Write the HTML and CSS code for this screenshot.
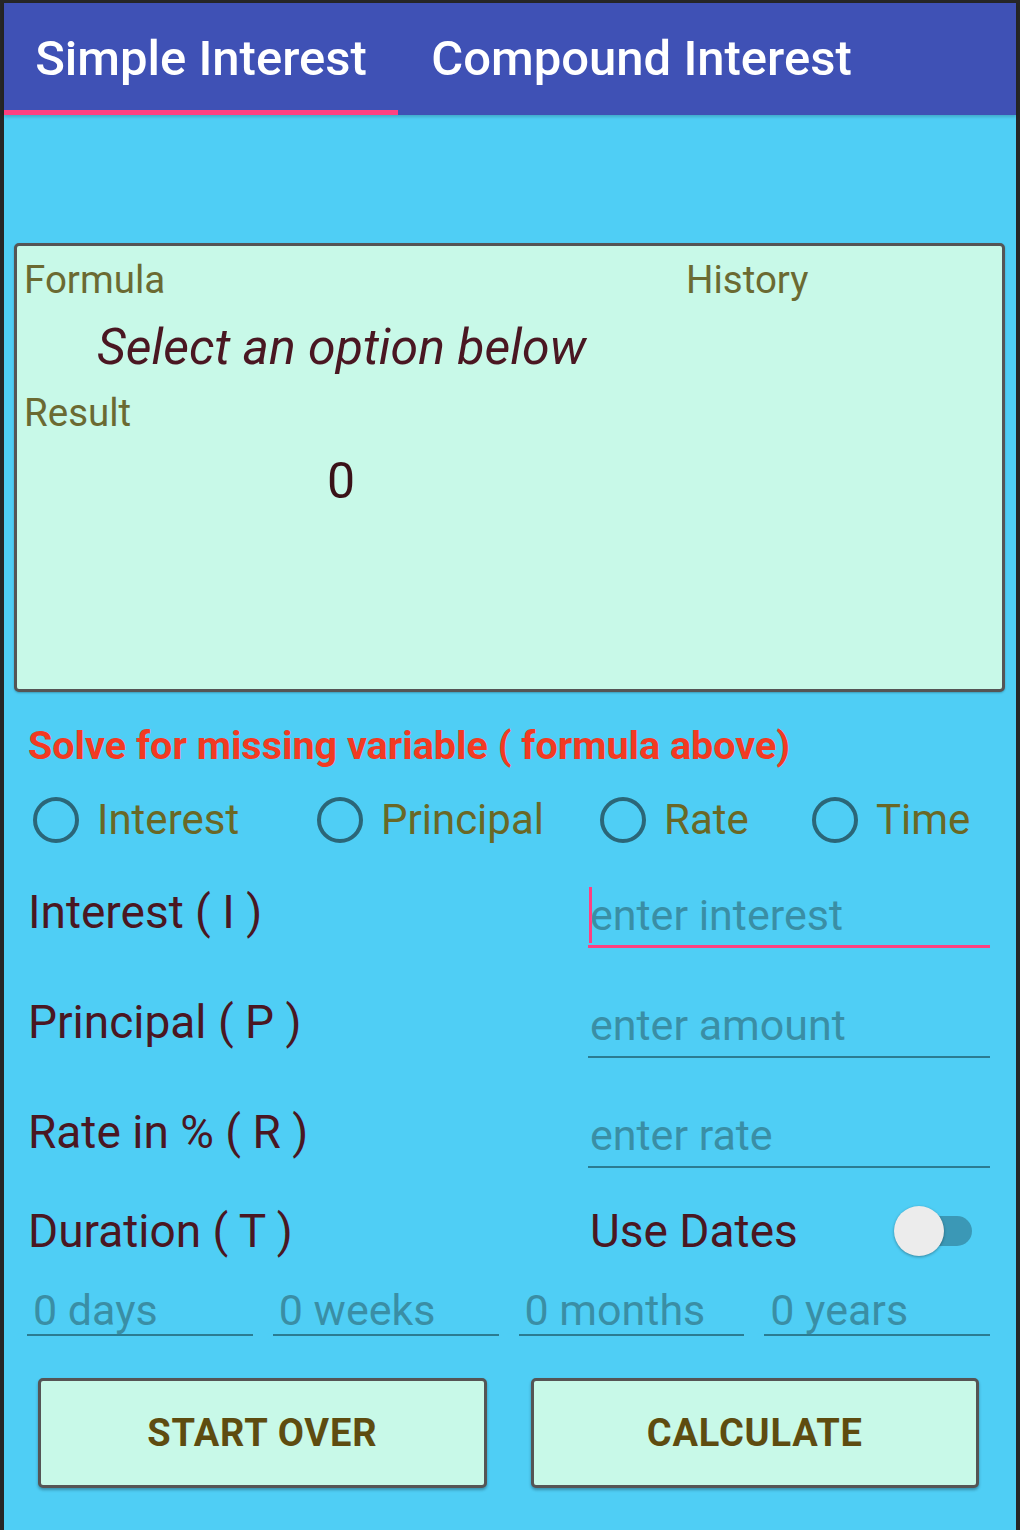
FILE: index.html
```html
<!DOCTYPE html>
<html lang="en">
<head>
<meta charset="utf-8">
<title>Interest Calculator</title>
<link rel="stylesheet" href="styles.css">
</head>
<body>
<div class="screen">
  <nav class="tabs">
    <div class="tab tab-active">Simple Interest</div>
    <div class="tab tab-second">Compound Interest</div>
  </nav>
  <main class="content">
    <section class="card">
      <div class="card-head">
        <span class="caption">Formula</span>
        <span class="caption">History</span>
      </div>
      <div class="formula">Select an option below</div>
      <div class="caption result-label">Result</div>
      <div class="result">0</div>
    </section>

    <div class="solve">Solve for missing variable ( formula above)</div>

    <div class="radios">
      <label class="radio"><span class="dot"></span><span class="radio-text">Interest</span></label>
      <label class="radio"><span class="dot"></span><span class="radio-text">Principal</span></label>
      <label class="radio"><span class="dot"></span><span class="radio-text">Rate</span></label>
      <label class="radio"><span class="dot"></span><span class="radio-text">Time</span></label>
    </div>

    <div class="row">
      <div class="row-label">Interest ( I )</div>
      <div class="field field-focus"><span class="caret"></span><span class="ph">enter interest</span></div>
    </div>
    <div class="row">
      <div class="row-label">Principal ( P )</div>
      <div class="field"><span class="ph">enter amount</span></div>
    </div>
    <div class="row">
      <div class="row-label">Rate in % ( R )</div>
      <div class="field"><span class="ph">enter rate</span></div>
    </div>
    <div class="row row-duration">
      <div class="row-label">Duration ( T )</div>
      <div class="use-dates">
        <span class="row-label">Use Dates</span>
        <span class="switch"></span>
      </div>
    </div>

    <div class="dates">
      <div class="date-field">0 days</div>
      <div class="date-field">0 weeks</div>
      <div class="date-field">0 months</div>
      <div class="date-field">0 years</div>
    </div>

    <div class="buttons">
      <button class="btn">START OVER</button>
      <button class="btn">CALCULATE</button>
    </div>
  </main>
</div>
</body>
</html>
```
FILE: styles.css
```css
* { box-sizing: border-box; }

html, body {
  margin: 0;
  padding: 0;
  background: #262626;
}

body {
  font-family: Roboto, "Noto Sans", "Liberation Sans", sans-serif;
}

.screen {
  width: 1020px;
  min-height: 1530px;
  border-top: 3px solid #262626;
  border-left: 4px solid #262626;
  border-right: 4px solid #262626;
  background: #4fcef5;
}

/* Tabs */
.tabs {
  display: flex;
  height: 112px;
  background: #3f51b5;
  box-shadow: 0 2px 3px rgba(0, 0, 0, 0.18);
  position: relative;
}

.tab {
  display: flex;
  align-items: center;
  justify-content: center;
  color: #ffffff;
  font-size: 49px;
  font-weight: 500;
  border-bottom: 5px solid transparent;
  padding-top: 4px;
}

.tab-active {
  width: 394px;
  border-bottom-color: #ff4081;
}

.tab-second {
  width: 487px;
}

/* Content */
.content {
  padding: 0 11px 0 10px;
}

.card {
  margin-top: 128px;
  height: 449px;
  background: #c8f9e8;
  border: 3px solid #555555;
  border-radius: 5px;
  padding: 12px 7px 0 7px;
  box-shadow: 0 1px 2px rgba(0, 0, 0, 0.25);
}

.card-head {
  display: grid;
  grid-template-columns: 662px auto;
  line-height: 44px;
}

.caption {
  font-size: 38.5px;
  color: #6b6a32;
}

.formula {
  margin-top: 15px;
  line-height: 60px;
  padding-left: 73px;
  font-size: 50px;
  font-style: italic;
  color: #4a1722;
}

.result-label {
  margin-top: 14px;
  line-height: 44px;
}

.result {
  margin-top: 16px;
  line-height: 60px;
  padding-left: 303px;
  font-size: 50px;
  color: #3a1218;
}

.solve {
  margin-top: 30px;
  height: 48px;
  line-height: 48px;
  padding-left: 14px;
  font-size: 39.5px;
  font-weight: 700;
  color: #f23a22;
}

/* Radios */
.radios {
  margin-top: 12px;
  height: 75px;
  padding-left: 19px;
  display: grid;
  grid-template-columns: 284px 283px 212px auto;
  align-items: center;
}

.radio {
  display: flex;
  align-items: center;
  gap: 18px;
}

.dot {
  width: 46px;
  height: 46px;
  border: 4px solid #2b6678;
  border-radius: 50%;
  flex: none;
}

.radio-text {
  font-size: 42px;
  color: #6a6826;
}

/* Rows */
.row {
  height: 110px;
  padding: 0 15px 0 14px;
  display: grid;
  grid-template-columns: 560px 1fr;
  align-items: center;
}

.row-label {
  font-size: 46px;
  color: #4a1722;
}

.field {
  align-self: end;
  margin-bottom: 19px;
  height: 64px;
  line-height: 60px;
  border-bottom: 2px solid #2b7c92;
  display: flex;
  align-items: center;
  padding-left: 2px;
}

.field-focus {
  border-bottom: 3px solid #ff4081;
}

.ph {
  font-size: 43px;
  color: #3a8ea5;
}

.caret {
  width: 3px;
  height: 56px;
  background: #ff4081;
  margin-left: -1px;
  margin-right: -2px;
  flex: none;
}

.row-duration {
  height: 88px;
}

.use-dates {
  display: flex;
  align-items: center;
  justify-content: space-between;
  padding-right: 18px;
}

.use-dates .row-label {
  padding-left: 2px;
}

.switch {
  position: relative;
  width: 77px;
  height: 30px;
  border-radius: 15px;
  background: #3b98b6;
}

.switch::before {
  content: "";
  position: absolute;
  left: -1px;
  top: -10px;
  width: 50px;
  height: 50px;
  border-radius: 50%;
  background: #ececec;
  box-shadow: 0 1px 3px rgba(0, 0, 0, 0.35);
}

/* Dates */
.dates {
  height: 61px;
  padding: 0 15px 0 13px;
  display: grid;
  grid-template-columns: repeat(4, 1fr);
  column-gap: 20px;
}

.date-field {
  border-bottom: 2px solid #2b7c92;
  font-size: 43px;
  line-height: 46px;
  padding-top: 12px;
  color: #3a8ea5;
  padding-left: 6px;
}

/* Buttons */
.buttons {
  margin-top: 42px;
  padding: 0 26px 0 24px;
  display: grid;
  grid-template-columns: 1fr 1fr;
  column-gap: 44px;
}

.btn {
  height: 110px;
  background: #c8f9e8;
  border: 3px solid #555555;
  border-radius: 5px;
  box-shadow: 0 2px 3px rgba(0, 0, 0, 0.3);
  font-family: Roboto, "Noto Sans", "Liberation Sans", sans-serif;
  font-size: 38px;
  font-weight: 700;
  letter-spacing: 0.8px;
  color: #5e4c10;
  padding: 0;
}
```
